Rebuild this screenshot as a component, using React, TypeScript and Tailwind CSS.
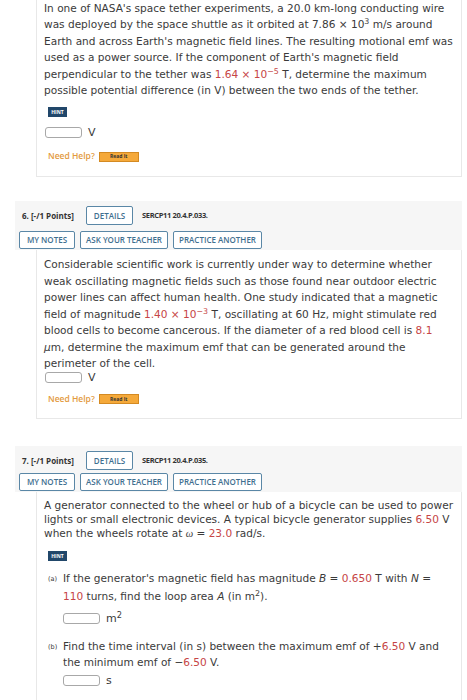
import React from 'react';

const R = ({ children }: { children: React.ReactNode }) => (
  <span className="text-[#c64545]">{children}</span>
);

const Hint = () => (
  <div className="flex h-[10px] w-[19px] items-center justify-center bg-[#21476a] font-['Open_Sans'] text-[5px] font-bold leading-none text-white">
    HINT
  </div>
);

const Answer = ({ unit }: { unit: React.ReactNode }) => (
  <div className="flex items-center gap-[6px]">
    <div className="h-[11px] w-[37px] rounded-[3px] border border-[#a8a8a8] bg-white" />
    <span className="text-[11px] leading-none">{unit}</span>
  </div>
);

const NeedHelp = () => (
  <div className="flex items-center gap-[4px] pl-[4px] font-['Open_Sans']">
    <span className="text-[8.5px] font-semibold text-[#e39a3e]">Need Help?</span>
    <div className="flex h-[10px] w-[40px] items-center justify-center border border-[#d48a22] bg-[#f5a93a] text-[5px] font-bold leading-none text-[#333]">
      Read It
    </div>
  </div>
);

const Btn = ({ label, w }: { label: string; w: string }) => (
  <div
    className={`flex h-[18px] items-center justify-center rounded-[2px] border border-[#5a87a6] bg-white font-['Open_Sans'] text-[8px] font-semibold text-[#3f6f8f] ${w}`}
  >
    {label}
  </div>
);

const Header = ({ num, code, gap }: { num: string; code: string; gap: string }) => (
  <div className="ml-[15px] w-[447px] bg-[#f6f6f6] pl-[4px] pt-[5px] pb-[1px] font-['Open_Sans'] text-[#333]">
    <div className="flex items-center">
      <span className="ml-[3px] w-[64px] text-[8px] font-bold">
        {num}. [-/1 Points]
      </span>
      <div className="flex h-[19px] w-[47px] items-center justify-center rounded-[2px] border border-[#5a87a6] bg-white text-[8px] font-semibold text-[#3f6f8f]">
        DETAILS
      </div>
      <span className="ml-[9px] text-[7.5px] font-bold tracking-[-0.35px]">{code}</span>
    </div>
    <div className={`flex gap-[5px] ${gap}`}>
      <Btn label="MY NOTES" w="w-[56px]" />
      <Btn label="ASK YOUR TEACHER" w="w-[88px]" />
      <Btn label="PRACTICE ANOTHER" w="w-[89px]" />
    </div>
  </div>
);

export default function App() {
  return (
    <div className="min-h-[700px] w-[467px] overflow-hidden bg-white font-['DejaVu_Sans'] text-[#3a3a3a]">
      {/* question 5, cut at top */}
      <div className="ml-[36px] w-[426px] border-x border-b border-[#e8e8e8] pl-[7px] pr-[6px] pb-[13px]">
        <p className="text-[10.55px] leading-[16.4px]">
          In one of NASA's space tether experiments, a 20.0 km-long conducting wire was deployed by the space shuttle as it orbited at 7.86 × 10<sup>3</sup> m/s around Earth and across Earth's magnetic field lines. The resulting motional emf was used as a power source. If the component of Earth's magnetic field perpendicular to the tether was <R>1.64 × 10<sup>−5</sup></R> T, determine the maximum possible potential difference (in V) between the two ends of the tether.
        </p>
        <div className="mt-[9px] pl-[4px]">
          <Hint />
        </div>
        <div className="mt-[10px] pl-[1px]">
          <Answer unit="V" />
        </div>
        <div className="mt-[12px]">
          <NeedHelp />
        </div>
      </div>

      <div className="h-[24px]" />
      <Header num="6" code="SERCP11 20.4.P.033." gap="mt-[6px]" />

      <div className="ml-[36px] w-[426px] border-x border-b border-[#e8e8e8] pl-[7px] pr-[6px] pt-[6px] pb-[13px]">
        <p className="text-[10.55px] leading-[16.5px]">
          Considerable scientific work is currently under way to determine whether weak oscillating magnetic fields such as those found near outdoor electric power lines can affect human health. One study indicated that a magnetic field of magnitude <R>1.40 × 10<sup>−3</sup></R> T, oscillating at 60 Hz, might stimulate red blood cells to become cancerous. If the diameter of a red blood cell is <R>8.1</R> <i>μ</i>m, determine the maximum emf that can be generated around the perimeter of the cell.
        </p>
        <div className="mt-[0px] pl-[1px]">
          <Answer unit="V" />
        </div>
        <div className="mt-[10px]">
          <NeedHelp />
        </div>
      </div>

      <div className="h-[27px]" />
      <Header num="7" code="SERCP11 20.4.P.035." gap="mt-[3px]" />

      <div className="ml-[36px] w-[426px] border-x border-[#e8e8e8] pl-[7px] pr-[6px] pt-[6px] pb-[20px]">
        <p className="text-[10.55px] leading-[14px]">
          A generator connected to the wheel or hub of a bicycle can be used to power lights or small electronic devices. A typical bicycle generator supplies <R>6.50</R> V when the wheels rotate at <i className="font-['Liberation_Serif']">ω</i> = <R>23.0</R> rad/s.
        </p>
        <div className="mt-[10px] pl-[4px]">
          <Hint />
        </div>
        <div className="mt-[9px] flex">
          <span className="w-[19px] pl-[4px] pt-[2px] text-[6.5px] leading-[14px]">(a)</span>
          <div className="flex-1 pr-[6px]">
            <p className="text-[10.55px] leading-[17.5px]">
              If the generator's magnetic field has magnitude <i>B</i> = <R>0.650</R> T with <i>N</i> = <R>110</R> turns, find the loop area <i>A</i> (in m<sup>2</sup>).
            </p>
            <div className="mt-[8px]">
              <Answer unit={<>m<sup>2</sup></>} />
            </div>
          </div>
        </div>
        <div className="mt-[14px] flex">
          <span className="w-[19px] pl-[4px] pt-[2px] text-[6.5px] leading-[14px]">(b)</span>
          <div className="flex-1 pr-[6px]">
            <p className="text-[10.55px] leading-[16px]">
              Find the time interval (in s) between the maximum emf of +<R>6.50</R> V and the minimum emf of −<R>6.50</R> V.
            </p>
            <div className="mt-[5px]">
              <Answer unit="s" />
            </div>
          </div>
        </div>
      </div>
    </div>
  );
}
